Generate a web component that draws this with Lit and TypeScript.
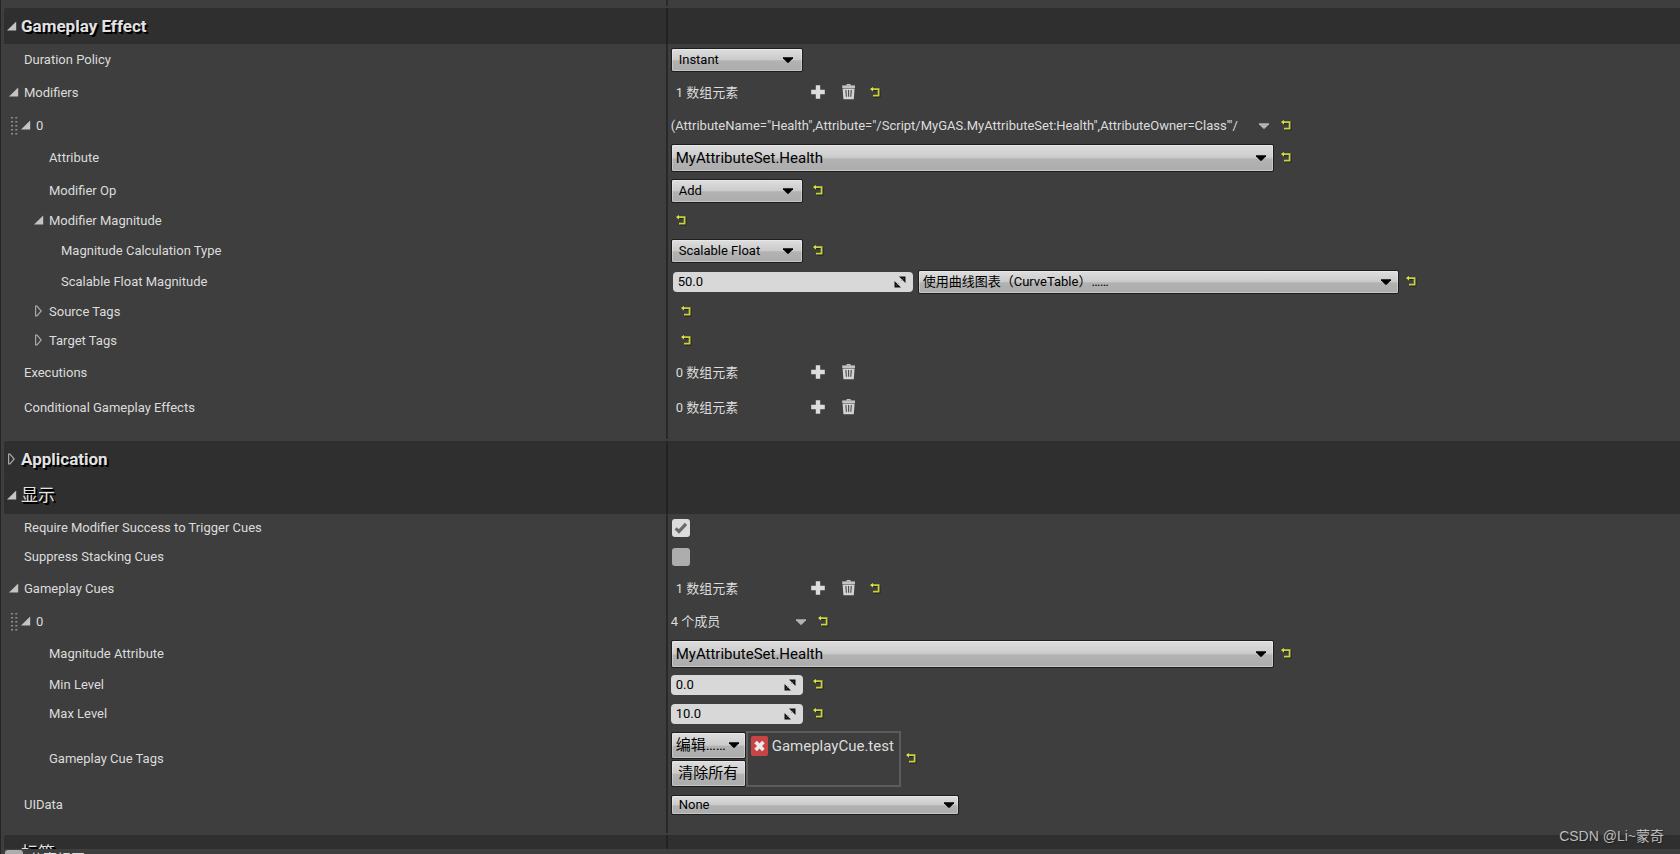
import { LitElement, html, svg, css, nothing, TemplateResult } from "lit";
import { customElement, property } from "lit/decorators.js";

/* ---------- icons ---------- */

const openArrow = html`<svg class="arrow" width="10" height="10" viewBox="0 0 10 10" aria-hidden="true">
  <path d="M9.2 0.4V9.4H0Z" fill="#c4c4c4" />
</svg>`;

const closedArrow = html`<svg class="arrow" width="10" height="12" viewBox="0 0 10 12" aria-hidden="true">
  <path d="M1.6 1.2H3L7.2 6L3 10.8H1.6Z" fill="none" stroke="#a8a8a8" stroke-width="1.2" />
</svg>`;

const downArrow = (fill: string) => html`<svg class="down" width="10" height="6" viewBox="0 0 10 6" aria-hidden="true">
  <path d="M0 0.3H10V1.3L5.6 5.7H4.4L0 1.3Z" fill=${fill} />
</svg>`;

const gripIcon = html`<svg width="7" height="18" viewBox="0 0 7 18" aria-hidden="true">
  ${[0, 4, 8, 12, 16].map(
    (y) => svg`<path d="M0 ${y}h2v1.4h-2zM4.3 ${y}h2v1.4h-2z" fill="#8f8f8f" />`
  )}
</svg>`;

const plusIcon = html`<svg width="14" height="14" viewBox="0 0 14 14" aria-hidden="true">
  <path d="M4.8 0.2H9.2V4.8H13.8V9.2H9.2V13.8H4.8V9.2H0.2V4.8H4.8Z" fill="#dcdcdc" />
</svg>`;

const trashIcon = html`<svg width="14" height="16" viewBox="0 0 14 16" aria-hidden="true">
  <path d="M4.6 1.4Q6.6 -0.4 8.6 1.4" fill="none" stroke="#c8c8c8" stroke-width="1.4" />
  <path d="M0.2 1.4H13V4H0.2Z" fill="#c4c4c4" />
  <path d="M0.6 4.6H12.6L11.8 15.2H1.4Z" fill="#d2d2d2" />
  <path d="M3.9 6L4.4 12.8M6.6 6V12.8M9.3 6L8.8 12.8" stroke="#4a4a4a" stroke-width="1.1" />
</svg>`;

const resetIcon = html`<svg width="11" height="11" viewBox="0 0 11 11" aria-hidden="true">
  <path d="M2.8 3H9.6V9.7H3.8" fill="none" stroke="#1c1c1c" stroke-width="1.5" />
  <path d="M2 2.1H8.6V8.7H3" fill="none" stroke="#c9d23a" stroke-width="1.8" />
  <path d="M0 2L3 0V4.4Z" fill="#dde63c" />
</svg>`;

const dragIcon = html`<svg class="drag" width="12" height="12" viewBox="0 0 12 12" aria-hidden="true">
  <path d="M5 0.5H11.5V7Z" fill="#111" />
  <path d="M0.5 5V11.5H7Z" fill="#111" />
  <path d="M2.2 9.8L4.4 7.6M7.6 4.4L9.8 2.2" stroke="#555" stroke-width="1" />
</svg>`;

const crossIcon = html`<svg width="11" height="12" viewBox="0 0 11 12" aria-hidden="true">
  <path d="M1.6 2L9.4 10M9.4 2L1.6 10" stroke="#ececec" stroke-width="3.6" />
</svg>`;

const checkIcon = html`<svg class="check" width="14" height="12" viewBox="0 0 14 12" aria-hidden="true">
  <path d="M1.6 6.4L5 9.4L12 1.8" fill="none" stroke="#6a6a6a" stroke-width="3.2" />
</svg>`;

/* ---------- value parts ---------- */

const reset = (extra = "") =>
  html`<button class="icon reset ${extra}" title="重置为默认值">${resetIcon}</button>`;

const combo = (id: string, size: string, value: string) => html`<span class="combo ${size}">
  <select id=${id}><option>${value}</option></select>${downArrow("#000")}
</span>`;

const spin = (id: string, size: string, value: string) => html`<span class="spin ${size}">
  <input id=${id} type="text" inputmode="decimal" .value=${value} />${dragIcon}
</span>`;

const tick = (id: string, checked: boolean) => html`<span class="tick">
  <input id=${id} type="checkbox" .checked=${checked} />${checked ? checkIcon : nothing}
</span>`;

const arrayValue = (count: number, changed: boolean) => html`
  <span class="count">${count} 数组元素</span>
  <div class="array-tools">
    <button class="icon" title="添加元素">${plusIcon}</button>
    <button class="icon" title="移除所有元素">${trashIcon}</button>
    ${changed ? reset("tight") : nothing}
  </div>
`;

interface Row {
  label: string;
  height: 28 | 29 | 31 | 32 | 33 | 34 | 35 | 62;
  level: 0 | 1 | 2 | 3;
  id?: string;
  expand?: "open" | "closed";
  grip?: boolean;
  value: TemplateResult;
}

const effectRows: Row[] = [
  { label: "Duration Policy", height: 31, level: 0, id: "duration", value: combo("duration", "small", "Instant") },
  { label: "Modifiers", height: 35, level: 0, expand: "open", value: arrayValue(1, true) },
  {
    label: "0", height: 32, level: 1, expand: "open", grip: true,
    value: html`<button class="summary long">
        <span>(AttributeName="Health",Attribute="/Script/MyGAS.MyAttributeSet:Health",AttributeOwner=Class'"/</span>
        ${downArrow("#b4b4b4")}</button>${reset("after")}`,
  },
  { label: "Attribute", height: 32, level: 2, id: "attribute", value: html`${combo("attribute", "wide", "MyAttributeSet.Health")}${reset("near")}` },
  { label: "Modifier Op", height: 33, level: 2, id: "op", value: html`${combo("op", "small", "Add")}${reset()}` },
  { label: "Modifier Magnitude", height: 28, level: 2, expand: "open", value: reset("lead") },
  { label: "Magnitude Calculation Type", height: 31, level: 3, id: "calc", value: html`${combo("calc", "small", "Scalable Float")}${reset()}` },
  {
    label: "Scalable Float Magnitude", height: 31, level: 3, id: "float",
    value: html`${spin("float", "broad", "50.0")}${combo("curve", "curve", "使用曲线图表（CurveTable）……")}${reset("near")}`,
  },
  { label: "Source Tags", height: 29, level: 2, expand: "closed", value: reset() },
  { label: "Target Tags", height: 29, level: 2, expand: "closed", value: reset() },
  { label: "Executions", height: 35, level: 0, value: arrayValue(0, false) },
  { label: "Conditional Gameplay Effects", height: 35, level: 0, value: arrayValue(0, false) },
];

const displayRows: Row[] = [
  { label: "Require Modifier Success to Trigger Cues", height: 28, level: 0, id: "require", value: tick("require", true) },
  { label: "Suppress Stacking Cues", height: 29, level: 0, id: "suppress", value: tick("suppress", false) },
  { label: "Gameplay Cues", height: 35, level: 0, expand: "open", value: arrayValue(1, true) },
  {
    label: "0", height: 32, level: 1, expand: "open", grip: true,
    value: html`<button class="summary brief"><span>4 个成员</span>${downArrow("#b4b4b4")}</button>${reset("after")}`,
  },
  { label: "Magnitude Attribute", height: 32, level: 2, id: "magattr", value: html`${combo("magattr", "wide", "MyAttributeSet.Health")}${reset("near")}` },
  { label: "Min Level", height: 29, level: 2, id: "min", value: html`${spin("min", "narrow", "0.0")}${reset()}` },
  { label: "Max Level", height: 29, level: 2, id: "max", value: html`${spin("max", "narrow", "10.0")}${reset()}` },
  {
    label: "Gameplay Cue Tags", height: 62, level: 2,
    value: html`<div class="tag-actions">
        <button class="raised"><span>编辑……</span>${downArrow("#000")}</button>
        <button class="raised">清除所有</button>
      </div>
      <div class="tag-box">
        <button class="remove" title="移除标签">${crossIcon}</button><span>GameplayCue.test</span>
      </div>
      ${reset("lead")}`,
  },
  { label: "UIData", height: 29, level: 0, id: "uidata", value: combo("uidata", "low", "None") },
];

/* ---------- one collapsible category ---------- */

@customElement("details-category")
export class DetailsCategory extends LitElement {
  @property() heading = "";
  @property({ type: Boolean }) open = false;
  @property({ attribute: false }) rows: Row[] = [];

  static styles = css`
    :host {
      display: block;
    }
    * {
      box-sizing: border-box;
    }
    button,
    input,
    select {
      font: inherit;
      color: inherit;
      margin: 0;
      padding: 0;
      border: 0;
      background: none;
      border-radius: 0;
      outline-offset: 1px;
    }
    svg {
      display: block;
      flex: none;
    }
    .head,
    .row,
    .tail {
      display: grid;
      grid-template-columns: var(--name-column) minmax(0, 1fr);
    }
    .head {
      height: 36px;
      background: #2f2f2f;
      border-radius: 3px 0 0 0;
    }
    .head button {
      display: flex;
      align-items: center;
      gap: 4px;
      padding-left: 3px;
      border-right: 2px solid #222;
      color: #e2e2e2;
      font-size: 17px;
      line-height: 20px;
      font-weight: 700;
      text-align: left;
      text-shadow: 1px 1px 0 #000, 2px 2px 0 #000;
    }
    .head.cjk {
      height: 37px;
    }
    .head.cjk button {
      padding-bottom: 1px;
      font-weight: 400;
    }
    .name {
      display: flex;
      align-items: center;
      border-right: 2px solid #282828;
      white-space: nowrap;
    }
    .name .arrow {
      margin: 0 5px 2px 0;
    }
    .l0 { padding-left: 20px; }
    .l1 { padding-left: 32px; }
    .l2 { padding-left: 45px; }
    .l3 { padding-left: 57px; }
    .l0.expand { padding-left: 5px; }
    .l2.expand { padding-left: 30px; }
    .l1.grip { padding-left: 7px; }
    .grip {
      gap: 3px;
    }
    .grip .arrow {
      margin-right: 2px;
    }
    .value {
      display: flex;
      align-items: center;
      padding-left: 3px;
      min-width: 0;
    }
    .tail {
      height: 14px;
      margin-bottom: 2px;
    }
    .h28 { height: 28px; }
    .h29 { height: 29px; }
    .h31 { height: 31px; }
    .h32 { height: 32px; }
    .h33 { height: 33px; }
    .h34 { height: 34px; }
    .h35 { height: 35px; }
    .h62 { height: 62px; }

    .icon {
      display: flex;
      flex: none;
    }
    .reset { margin: 0 0 1px 10px; }
    .reset.near { margin-left: 7px; }
    .reset.lead { margin-left: 5px; }
    .reset.after { margin-left: 12px; }
    .reset.tight { margin: 1px 0 0 -3px; }
    .count {
      width: 140px;
      padding-left: 5px;
    }
    .array-tools {
      display: flex;
      align-items: center;
      gap: 17px;
      padding-bottom: 2px;
    }

    .combo {
      display: grid;
      align-items: center;
      flex: none;
      color: #000;
    }
    .combo > * {
      grid-area: 1 / 1;
    }
    .combo .down {
      justify-self: end;
      margin-right: 10px;
      pointer-events: none;
    }
    .combo select,
    .raised {
      appearance: none;
      width: 100%;
      height: 24px;
      padding: 0 24px 0 7px;
      border: 1px solid #1e1e1e;
      border-radius: 2px;
      background: linear-gradient(#dedede, #cbcbcb 48%, #b2b2b2 54%, #acacac);
      box-shadow: inset 0 0 0 1px rgba(255, 255, 255, 0.3);
      color: #000;
    }
    .small { width: 132px; }
    .wide { width: 603px; }
    .low { width: 288px; }
    .curve { width: 481px; margin-left: 5px; }
    .combo.low select { height: 20px; }
    .combo.wide select { height: 28px; padding-left: 4px; font-size: 15px; }
    .combo.curve select { padding-left: 4px; }
    .combo.wide .down,
    .combo.curve .down { margin-right: 8px; }
    .combo.low .down { margin-right: 5px; }

    .spin {
      display: grid;
      align-items: center;
      flex: none;
      color: #000;
    }
    .spin > * {
      grid-area: 1 / 1;
    }
    .spin input {
      width: 100%;
      height: 20px;
      padding: 0 24px 0 5px;
      border-radius: 4px;
      background: #d8d8d8;
    }
    .drag {
      justify-self: end;
      margin-right: 7px;
      pointer-events: none;
    }
    .narrow { width: 132px; }
    .broad { width: 240px; margin-left: 2px; }

    .tick {
      display: grid;
      place-items: center;
      margin-left: 1px;
    }
    .tick > * {
      grid-area: 1 / 1;
    }
    .tick input {
      appearance: none;
      width: 18px;
      height: 18px;
      border-radius: 3px;
      background: #adadad;
    }
    .tick input:checked {
      background: #dcdcdc;
    }
    .check {
      pointer-events: none;
    }

    .summary {
      display: flex;
      align-items: center;
      justify-content: space-between;
      text-align: left;
    }
    .summary span {
      overflow: hidden;
      white-space: nowrap;
    }
    .summary.long { width: 598px; }
    .summary.brief { width: 135px; }
    .long span { width: 569px; }

    .tag-actions {
      display: flex;
      flex-direction: column;
      gap: 1px;
      width: 75px;
    }
    .raised {
      display: flex;
      align-items: center;
      justify-content: space-between;
      height: 27px;
      padding: 0 6px 0 4px;
      font-size: 15px;
      white-space: nowrap;
    }
    .raised:last-child {
      justify-content: center;
      padding: 0;
    }
    .tag-box {
      display: flex;
      align-items: flex-start;
      gap: 4px;
      height: 56px;
      padding: 3px 5px 3px 3px;
      border: 2px solid #5c5c5c;
      font-size: 15px;
      line-height: 20px;
    }
    .remove {
      display: grid;
      place-items: center;
      width: 17px;
      height: 20px;
      border-radius: 2px;
      background: #c74545;
    }
  `;

  private row(r: Row) {
    const cls = `name l${r.level} ${r.expand ? "expand" : ""} ${r.grip ? "grip" : ""}`;
    const arrow = r.expand === "open" ? openArrow : r.expand === "closed" ? closedArrow : nothing;
    return html`<div class="row h${r.height}">
      <div class=${cls}>
        ${r.grip ? gripIcon : nothing}
        ${r.expand ? html`<button class="icon" title="展开或折叠">${arrow}</button>` : nothing}
        ${r.id ? html`<label for=${r.id}>${r.label}</label>` : html`<span>${r.label}</span>`}
      </div>
      <div class="value">${r.value}</div>
    </div>`;
  }

  render() {
    const latin = /^[\x20-\x7e]+$/.test(this.heading);
    return html`
      <div class="head ${latin ? "" : "cjk"}">
        <button aria-expanded=${this.open ? "true" : "false"}>
          ${this.open ? openArrow : closedArrow}
          <span>${this.heading}</span>
        </button>
      </div>
      ${this.rows.map((r) => this.row(r))}
      ${this.rows.length ? html`<div class="tail"><div class="name"></div></div>` : nothing}
    `;
  }
}

/* ---------- page ---------- */

@customElement("app-root")
export class AppRoot extends LitElement {
  static styles = css`
    :host {
      --name-column: 39.6%;
      display: block;
      position: relative;
      height: 100vh;
      overflow: hidden;
      box-sizing: border-box;
      border-left: 1px solid #242424;
      background: #3e3e3e;
      color: #dcdcdc;
      font: 13px/16px Roboto, "Noto Sans CJK SC", sans-serif;
    }
    .panel {
      height: calc(100vh - 5px);
      padding-left: 3px;
      overflow: hidden;
    }
    .previous {
      width: var(--name-column);
      height: 6px;
      margin-bottom: 2px;
      box-sizing: border-box;
      border-right: 2px solid #282828;
    }
    .footer {
      display: flex;
      align-items: center;
      gap: 6px;
      height: 20px;
      padding-left: 4px;
      font-size: 14px;
    }
    .footer input {
      appearance: none;
      width: 18px;
      height: 18px;
      margin: 0;
      border-radius: 3px;
      background: #adadad;
    }
    .credit {
      position: absolute;
      right: 16px;
      bottom: 8px;
      color: #bdbdbd;
      font: 14px/20px "Liberation Sans", "Noto Sans CJK SC", sans-serif;
      text-shadow: 1px 1px 1px #222;
    }
  `;

  render() {
    return html`
      <main class="panel">
        <div class="previous"></div>
        <details-category heading="Gameplay Effect" open .rows=${effectRows}></details-category>
        <details-category heading="Application"></details-category>
        <details-category heading="显示" open .rows=${displayRows}></details-category>
        <details-category heading="标签" open></details-category>
      </main>
      <div class="footer">
        <input id="split" type="checkbox" /><label for="split">分离视图</label>
      </div>
      <div class="credit">CSDN @Li~蒙奇</div>
    `;
  }
}
